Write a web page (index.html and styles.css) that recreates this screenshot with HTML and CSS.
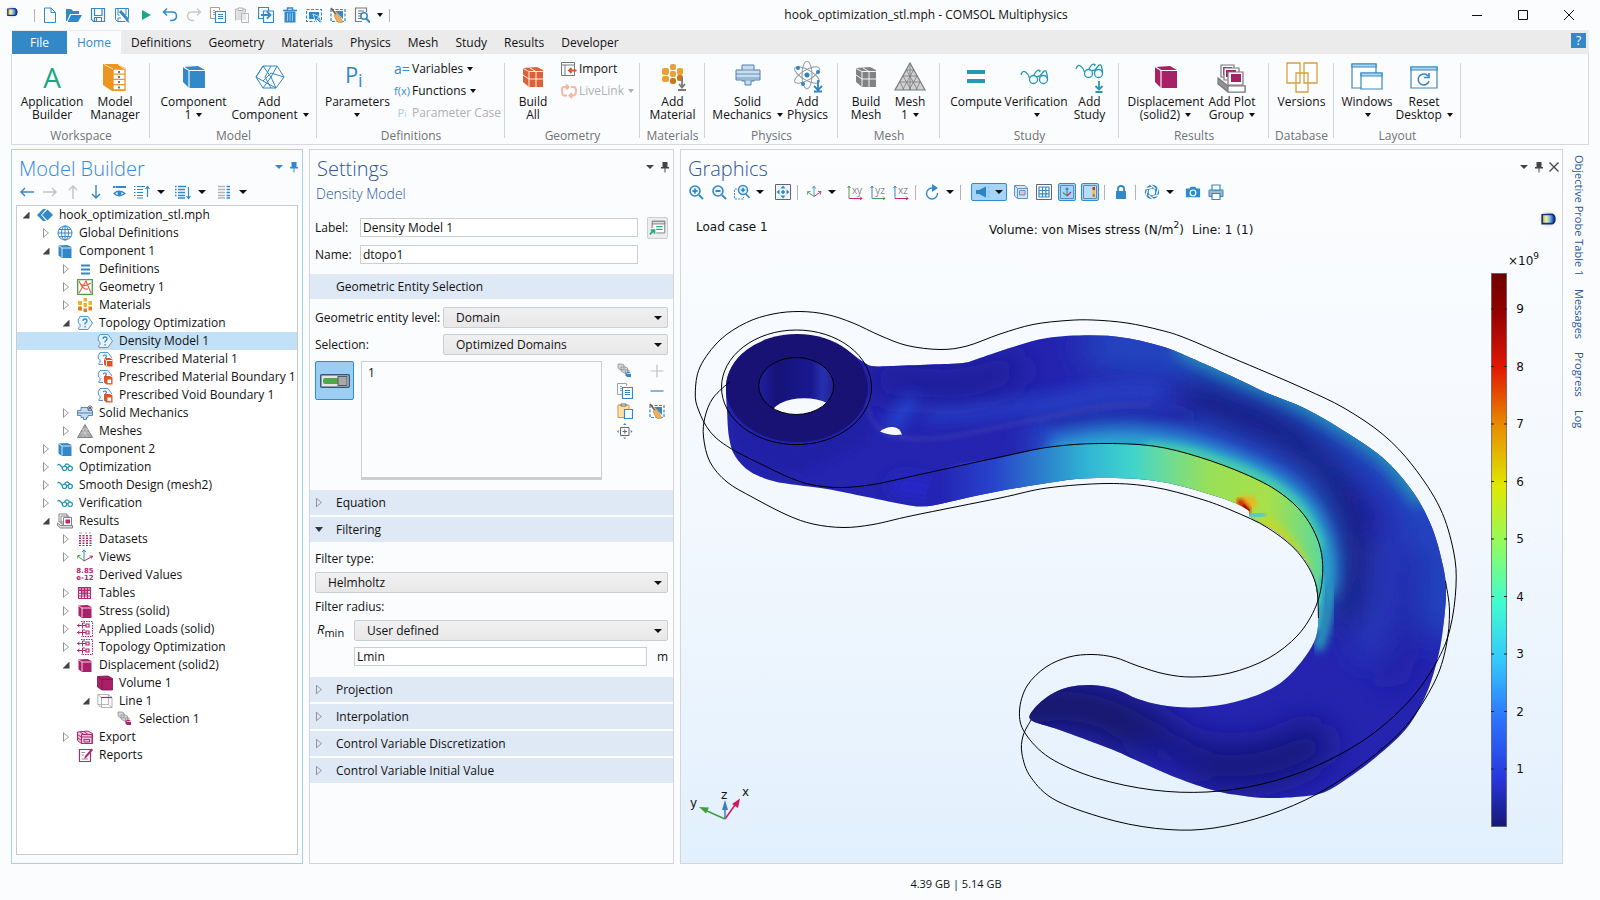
FILE: index.html
```html
<!DOCTYPE html>
<html lang="en">
<head>
<meta charset="utf-8">
<title>hook_optimization_stl.mph - COMSOL Multiphysics</title>
<link rel="stylesheet" href="styles.css">
</head>
<body>
<svg class="defs" aria-hidden="true">
  <symbol id="new" viewBox="0 0 16 16"><path d="M2.500 1H9L13.500 5.500V15.500H2.500ZM9 1V5.500H13.500" fill="none" stroke="#3388c8"/></symbol>
  <symbol id="open" viewBox="0 0 16 16"><path d="M0 2H5L7 4H13V7H4L1 14H0Z" fill="#3388c8"/><path d="M5 8H16L12 15H1.500Z" fill="#3388c8"/></symbol>
  <symbol id="save" viewBox="0 0 16 16"><path d="M1.500 1.500H14.500V14.500H3.500L1.500 12.500ZM4.500 1.500V8.500H12V1.500M4.500 14.500V10.500H11.500V14.500M6.500 11V14" fill="none" stroke="#3388c8" stroke-width="1.200"/></symbol>
  <symbol id="saveas" viewBox="0 0 16 16"><path d="M1.500 1.500H14.500V14.500H3.500L1.500 12.500ZM4 1.500V8H12V1.500M4 14.500V11H7" fill="none" stroke="#3388c8"/><path d="M6 5 14 14" stroke="#fff" stroke-width="4.500"/><path d="M6 4 14 13" stroke="#3388c8" stroke-width="3"/><path d="M13 12 16 16 12 14Z" fill="#3388c8"/></symbol>
  <symbol id="play" viewBox="0 0 16 16"><path d="M4 3 13 8 4 13Z" fill="#1ba784"/></symbol>
  <symbol id="undo" viewBox="0 0 16 16"><path d="M1.500 5H10Q14.500 5 14.500 9T10 13.500H8M5 1.500 1.500 5 5 8.500" fill="none" stroke="#3388c8" stroke-width="1.500"/></symbol>
  <symbol id="redo" viewBox="0 0 16 16"><path d="M14.500 5H6Q1.500 5 1.500 9T6 13.500H8M11 1.500 14.500 5 11 8.500" fill="none" stroke="#c8c8ca" stroke-width="1.400"/></symbol>
  <symbol id="copy" viewBox="0 0 16 16"><path d="M5 11.500H.5V.5H9.500V3M3 3.500H5M3 5.500H5M3 7.500H5" fill="none" stroke="#a0a0a4"/><path d="M5.500 4.500H15.500V15.500H5.500ZM8 7.500H13M8 9.500H13M8 11.500H13" fill="#fff" stroke="#3388c8" stroke-width="1.200"/></symbol>
  <symbol id="paste" viewBox="0 0 16 16"><path d="M1 2H12V13H1Z" fill="#dedee0"/><path d="M4 3.500V1H9V3.500Z" fill="#fff" stroke="#b0b0b2"/><path d="M1.500 13.500V2H4M9 2H11.500V5M7.500 6.500H14.500V15.500H7.500Z" fill="#fff" fill-opacity=".3" stroke="#b8b8ba"/></symbol>
  <symbol id="dup" viewBox="0 0 16 16"><path d="M.5.5H10.500V4H15.500V15.500H5.500V11.500H.5ZM10.500 4H5.500V11.500" fill="none" stroke="#3388c8" stroke-width="1.200"/><path d="M3 8H12M9 4.500 12.500 8 9 11.500" fill="none" stroke="#3388c8" stroke-width="1.800"/></symbol>
  <symbol id="trash" viewBox="0 0 16 16"><path d="M2.500 4.500H13.500V15.500H2.500Z" fill="#3388c8"/><path d="M1 3.500H15M5.500 3V1H10.500V3" fill="none" stroke="#3388c8" stroke-width="1.500"/><path d="M5.500 6V14M8 6V14M10.500 6V14" stroke="#9cc8ec"/></symbol>
  <symbol id="selbox" viewBox="0 0 16 16"><path d="M.5 2.500H15.500V14.500H.5Z" fill="none" stroke="#3388c8" stroke-dasharray="3 1.500" stroke-width="1.200"/><path d="M3 5H13V9L15 15 8 12H3Z" fill="#3388c8"/><path d="M7 7 14 10 11.500 11.200 15.500 15 14 16 10.500 12.500 9.500 15Z" fill="#3388c8" stroke="#fff" stroke-width=".7"/></symbol>
  <symbol id="clearsel" viewBox="0 0 16 16"><path d="M1 2.500H15V14.500H1Z" fill="none" stroke="#3388c8" stroke-dasharray="3 1.500" stroke-width="1.200"/><path d="M5 4H13V12Z" fill="#3388c8"/><path d="M1 1 6.500 8" stroke="#806040" stroke-width="1.800"/><path d="M4 8 8 6 13 15 9 16Q5 13 4 8Z" fill="#eeb060" stroke="#c88838" stroke-width=".6"/></symbol>
  <symbol id="find" viewBox="0 0 16 16"><path d="M8 14.500H1.500V1H12.500V5M4 4H10M4 6.500H8M4 9H7M4 11.500H7" fill="none" stroke="#77777a" stroke-width="1.100"/><circle cx="10" cy="9" r="3.200" fill="#fff" stroke="#3388c8" stroke-width="1.500"/><path d="M12 11.500 16 15.500" stroke="#3388c8" stroke-width="2"/></symbol>

  <symbol id="L-app" viewBox="0 0 32 32"><text x="16" y="27" font-family="Open Sans" font-size="28" text-anchor="middle" fill="#1ba784">A</text></symbol>
  <symbol id="L-manager" viewBox="0 0 32 32"><path d="M4 3H19L26 7V30H13L4 24Z" fill="#ee9420"/><path d="M14 8H26V29H14ZM14 13.200H26M14 18.400H26M14 23.600H26" fill="#fff" stroke="#ee9420" stroke-width="1.300"/><path d="M5 3.500 14 8M19 3.500 26 8" stroke="#fff" stroke-width=".8"/><path d="M19 10H21V12H19ZM19 15H21V17H19ZM19 20H21V22H19ZM19 25.500H21V27.500H19Z" fill="#77777a"/></symbol>
  <symbol id="L-cube" viewBox="0 0 32 32"><path d="M5 6 20 5 27 9V27H11L5 21Z" fill="currentColor"/><path d="M5.500 6 11 9.500H27M11 9.500V27" fill="none" stroke="#fff" stroke-width="1.100"/></symbol>
  <symbol id="L-addcomp" viewBox="0 0 32 32"><path d="M9 5H23L30 16 22 27H9L2 16ZM9 5 17 16 9 27M23 5 17 16 22 27M9 5 2 16M2 16 9 20 17 12 30 16M9 20 22 27M17 5 11 16 17 27" fill="none" stroke="#3388c8" stroke-width="1"/></symbol>
  <symbol id="L-param" viewBox="0 0 32 32"><text x="5" y="22" font-family="Open Sans" font-size="22" fill="#3388c8">P</text><text x="18" y="26" font-family="Open Sans" font-size="18" fill="#3388c8">i</text></symbol>
  <symbol id="L-bricks" viewBox="0 0 32 32"><path d="M6 7 20 6 26 9V26H12L6 21Z" fill="currentColor"/><path d="M6 7.500 12 10.500H26M12 10.500V26M19 10.500V26M12 18H26M6 14 12 18M13 7 19 10.500" fill="none" stroke="#fff" stroke-width=".9"/></symbol>
  <symbol id="L-material" viewBox="0 0 32 32"><g fill="#e8a038"><rect x="13" y="3" width="6" height="6" rx="2"/><rect x="5" y="7" width="7" height="7" rx="2"/><rect x="20" y="7" width="6" height="7" rx="2"/><rect x="13" y="10" width="6" height="6" rx="2"/><rect x="5" y="15" width="7" height="6" rx="2"/></g><g fill="#cc7818"><rect x="20" y="14" width="6" height="6" rx="2"/><rect x="13" y="17" width="6" height="6" rx="2"/></g><path d="M25 17V26M22 23 25 26.500 28 23M21 29H29" fill="none" stroke="#7a7a7c" stroke-width="1.800"/></symbol>
  <symbol id="L-solid" viewBox="0 0 32 32"><path d="M10 4H22V9H28V19H22V20H19V24H13V20H10V19H4V9H10Z" fill="#c8dcf0" stroke="#5080a8"/><path d="M10 9H22M4 13H28M10 19H22M4 17H28" stroke="#5080a8" stroke-width=".8"/></symbol>
  <symbol id="L-atom" viewBox="0 0 32 32"><g fill="none" stroke="#9098a0"><ellipse cx="15" cy="14" rx="5" ry="14"/><ellipse cx="15" cy="14" rx="5" ry="14" transform="rotate(60 15 14)"/><ellipse cx="15" cy="14" rx="5" ry="14" transform="rotate(120 15 14)"/></g><g fill="#2c84c4"><circle cx="15" cy="14" r="2.500"/><circle cx="6" cy="7" r="2"/><circle cx="26" cy="11" r="2"/><circle cx="11" cy="23" r="2"/></g><path d="M26 19V28M22 25 26 29 30 25M22 30.500H30" fill="none" stroke="#2c84c4" stroke-width="1.800"/></symbol>
  <symbol id="L-mesh" viewBox="0 0 32 32"><path d="M16 2 31 29H1Z" fill="#d0d0d2" stroke="#7a7a7c" stroke-width="1.200"/><path d="M12.500 9H19.500M9 15H23M6 21H26M12.500 9 23.500 29M19.500 9 8.500 29M9 15 17 29M23 15 15 29M6 21 10 29M26 21 22 29M16 2V29" fill="none" stroke="#7a7a7c" stroke-width=".8"/></symbol>
  <symbol id="L-compute" viewBox="0 0 32 32"><path d="M7 9H25V13H7ZM7 18H25V22H7Z" fill="#2498b4"/></symbol>
  <symbol id="L-glasses" viewBox="0 0 32 32"><g fill="none" stroke="#2498b4" stroke-width="1.300"><circle cx="13.500" cy="18.500" r="4"/><circle cx="23.500" cy="18.500" r="4"/><path d="M1 14Q2.500 9 5.500 11T9.500 17M17 16Q18.500 14.500 20 16M14 14Q17 8 20 9.500L19.500 11M19 16 24 10Q27 8.500 27.500 18"/></g></symbol>
  <symbol id="L-addstudy" viewBox="0 0 32 32"><g fill="none" stroke="#2498b4" stroke-width="1.300"><circle cx="14.500" cy="12.500" r="4"/><circle cx="24.500" cy="12.500" r="4"/><path d="M2 8Q3.500 3 6.500 5T10.500 11M18 10Q19.500 8.500 21 10M15 8Q18 2 21 3.500L20.500 5M20 10 25 4Q28 2.500 28.500 12"/><path d="M25 20V28M21.500 25 25 28.500 28.500 25M21.500 31H28.500" stroke-width="1.800"/></g></symbol>
  <symbol id="L-plotgroup" viewBox="0 0 32 32"><g stroke="#77777a" stroke-width="1.200"><path d="M5 4H18V16H5Z" fill="#fff"/><path d="M7 6H16V14H7Z" fill="#a82068" stroke="none"/><path d="M8 7H23V19H8Z" fill="#fff"/><path d="M10 9H20V16H10Z" fill="#a82068" stroke="none"/><path d="M12 11H27V24H12Z" fill="#fff"/><path d="M15 13H25V21H15Z" fill="#a82068" stroke="none"/><path d="M2 17 12 25H29V31H12L2 23Z" fill="#909294"/><path d="M12 25H29V31H12Z" fill="#fff"/></g></symbol>
  <symbol id="L-versions" viewBox="0 0 32 32"><g fill="#fff" stroke="#d8a040" stroke-width="1.300"><path d="M1 2H14V22H1ZM18 2H31V22H18ZM10 12H22V31H10Z"/></g></symbol>
  <symbol id="L-windows" viewBox="0 0 32 32"><g fill="#fff" stroke="#3c88bc" stroke-width="1.200"><path d="M1 3H25V27H1Z"/><path d="M1 3H25V6H1Z" fill="#a8d8f8"/><path d="M10 12H31V28H10Z"/><path d="M10 12H31V15H10Z" fill="#a8d8f8"/></g></symbol>
  <symbol id="L-reset" viewBox="0 0 32 32"><g fill="#fff" stroke="#3c88bc" stroke-width="1.200"><path d="M3 6H29V27H3Z"/><path d="M3 6H29V9H3Z" fill="#a8d8f8"/><path d="M20 15A5.500 5.500 0 1 0 21 20M21 12V16.500H16" fill="none" stroke-width="1.600"/></g></symbol>

  <symbol id="s-import" viewBox="0 0 16 16"><path d="M.5 1.500H13.500V14.500H.5ZM.5 4H13.500M4 4V14" fill="#fff" stroke="#77777a"/><path d="M15.500 9.500H8M10.500 7 8 9.500 10.500 12" fill="none" stroke="#dc5428" stroke-width="1.800"/></symbol>
  <symbol id="s-link" viewBox="0 0 16 16"><path d="M6 12.500H3Q1 12.500 1 8T3 4H6M5 1.500 7.500 4 5 6.500M10 4H13Q15 4 15 8T13 12.500H10M11 10 8.500 12.500 11 15" fill="none" stroke="#f4b8a4" stroke-width="2"/></symbol>

  <symbol id="pin" viewBox="0 0 10 12"><path d="M2.500 1H7.500V6H9V7.500H1V6H2.500ZM4.500 7.500H5.500V11.500H4.500Z" fill="currentColor"/></symbol>
  <symbol id="t-left" viewBox="0 0 16 16"><path d="M15 8H2M6 4 2 8 6 12" fill="none" stroke="currentColor" stroke-width="1.400"/></symbol>
  <symbol id="t-eye" viewBox="0 0 16 16"><path d="M2 3H15" stroke="#3388c8" stroke-width="2" stroke-dasharray="2 .5 12"/><path d="M3 9.500Q8 5 14 9.500 8 14 3 9.500Z" fill="none" stroke="#3388c8" stroke-width="1.300"/><circle cx="8.500" cy="9.500" r="2" fill="#3388c8"/></symbol>
  <symbol id="t-list" viewBox="0 0 16 16"><path d="M0 2.500H1.500M0 5.500H1.500M0 8.500H1.500M0 11.500H1.500M3 2.500H11M3 5.500H9M3 8.500H9M3 11.500H9M3 14H9" stroke="#3388c8" stroke-width="1.200"/><path d="M13.500 13V3M11.500 5 13.500 2.500 15.500 5" fill="none" stroke="#3388c8" stroke-width="1.200"/></symbol>
  <symbol id="t-listd" viewBox="0 0 16 16"><path d="M0 2.500H1.500M0 5.500H1.500M0 8.500H1.500M0 11.500H1.500M3 2.500H11M3 5.500H10M3 8.500H10M3 11.500H10M3 14H10" stroke="#3388c8" stroke-width="1.600"/><path d="M13.500 3V14M11.500 12 13.500 14.500 15.500 12" fill="none" stroke="#3388c8" stroke-width="1.200"/></symbol>
  <symbol id="t-cols" viewBox="0 0 16 16"><path d="M2 2.500H9M2 5.500H9M2 8.500H9M2 11.500H9M2 14H9" stroke="#b4b4b6" stroke-width="1.400"/><path d="M10.500 2.500H14M10.500 5.500H14M10.500 8.500H14M10.500 11.500H14M10.500 14H14" stroke="#3388c8" stroke-width="1.500"/></symbol>

  <symbol id="i-root" viewBox="0 0 16 16"><path d="M0 8 6 2H9L4 8 9 14H6Z" fill="#3388c8"/><path d="M5 8 10.500 2.500 16 8 10.500 13.500Z" fill="#3388c8"/></symbol>
  <symbol id="i-globe" viewBox="0 0 16 16"><g fill="none" stroke="#3388c8"><circle cx="8" cy="8" r="7"/><ellipse cx="8" cy="8" rx="3.500" ry="7"/><path d="M1 8H15M2 4.500H14M2 11.500H14M8 1V15"/></g></symbol>
  <symbol id="i-cube" viewBox="0 0 16 16"><path d="M1.500 2.500 10.500 2 14.500 4V15H5L1.500 12.500Z" fill="currentColor"/><path d="M2 3 5 5H14.500M5 5V14.500" fill="none" stroke="#fff" stroke-width=".8"/></symbol>
  <symbol id="i-defs" viewBox="0 0 16 16"><path d="M4 4.500H13M4 8.500H13M4 12.500H13" stroke="#3388c8" stroke-width="2"/></symbol>
  <symbol id="i-geom" viewBox="0 0 16 16"><path d="M.7.700H15.300V15.300H.7Z" fill="#fff" stroke="#48a048" stroke-width="1.300"/><path d="M2 14 9 2 14 14M2 2Q5 10 14 4M3 4Q6 11 11 10" fill="none" stroke="#e06038" stroke-width="1.100"/></symbol>
  <symbol id="i-mat" viewBox="0 0 16 16"><path d="M6.500 1H10V4.500H6.500ZM1 4H5V8H1ZM6.500 6H10V10H6.500ZM11.500 4H15V8H11.500Z" fill="#f0b030"/><path d="M1 9.500H5V13.500H1ZM6.500 11.500H10V15H6.500ZM11.500 9.500H15V13.500H11.500Z" fill="#dc8018"/></symbol>
  <symbol id="i-topo" viewBox="0 0 16 16"><path d="M3 1.500H11L15.500 8 11 14.500H2Q.5 13 3 11.500 4 9 1.500 8 0 5 3 1.500Z" fill="#e8f2fc" stroke="#5898cc"/><path d="M6 6Q6 4 8 4T10 6Q10 7 8 8.500V9.500M8 11V12.500" fill="none" stroke="#3388c8" stroke-width="1.300"/></symbol>
  <symbol id="i-presc" viewBox="0 0 16 16"><path d="M3 1.500H11L15 7M6 13.500H2Q.5 13 3 11.500 4 9 1.500 8 0 5 3 1.500" fill="#e8f2fc" stroke="#5898cc"/><path d="M6 5Q8 3 9.500 5L8 8" fill="none" stroke="#3388c8" stroke-width="1.200"/><path d="M7 7H13L15.500 8.500V15.500H9.500L7 13.500Z" fill="#dc5428"/><path d="M7 7.500 9.500 9.500H15.500M9.500 9.500V15" fill="none" stroke="#fff" stroke-width=".9"/></symbol>
  <symbol id="i-prescb" viewBox="0 0 16 16"><path d="M3 1.500H11L15 7M6 13.500H2Q.5 13 3 11.500 4 9 1.500 8 0 5 3 1.500" fill="#e8f2fc" stroke="#5898cc"/><path d="M6 5Q8 3 9.500 5L8 8" fill="none" stroke="#3388c8" stroke-width="1.200"/><path d="M7 7H13L15.500 8.500V15.500H9.500L7 13.500Z" fill="#dc5428"/><path d="M10.500 10.500H14.200V14.200H10.500Z" fill="#fff"/></symbol>
  <symbol id="i-solid" viewBox="0 0 16 16"><path d="M4 2.500H11V5.500H15.500V10.500H11V12.500H9.500V14.500H6.500V12.500H4V10.500H.5V5.500H4Z" fill="#c8dcf0" stroke="#5080a8" stroke-width=".9"/><path d="M0 8H16" stroke="#5080a8"/><path d="M13 0V6M10 3H16M11 1 15 5M15 1 11 5" stroke="#606468" stroke-width=".9"/></symbol>
  <symbol id="i-mesh" viewBox="0 0 16 16"><path d="M8 1.500 15.500 14.500H.5Z" fill="#a8a8aa" stroke="#828284"/><path d="M5.500 6H10.500M3.500 10H12.500M5.500 6 10.500 14M10.500 6 5.500 14" stroke="#d8d8da" stroke-width=".7"/></symbol>
  <symbol id="i-glass" viewBox="0 0 16 16"><g fill="none" stroke="#2498b4" stroke-width="1.200"><circle cx="7.500" cy="9.300" r="2.200"/><circle cx="13.200" cy="9.300" r="2.200"/><path d="M.5 6.500Q1.500 4.500 3 6T5.500 9M7.500 7Q9 4.500 10.500 5L13 7M9.700 8.500 11 8.500"/></g></symbol>
  <symbol id="i-results" viewBox="0 0 16 16"><path d="M2 1H10V9H2ZM4 3H12V11H4Z" fill="#fff" stroke="#828284"/><path d="M6.500 4.500H14.500V12.500H6.500Z" fill="#fff" stroke="#828284"/><path d="M8.500 6.500H13V10.500H8.500Z" fill="#c02870"/><path d="M.5 10 3.500 12.500H15.500V15H3.500L.5 12.500Z" fill="#ddd" stroke="#828284"/></symbol>
  <symbol id="i-data" viewBox="0 0 16 16"><path d="M2 2H5M8 2H10M12 2H14" stroke="#a0a0a2"/><path d="M3 4V15M6.500 4V15M10 4V15M13.500 4V15" stroke="#b02870" stroke-width="2" stroke-dasharray="1.500 1"/></symbol>
  <symbol id="i-views" viewBox="0 0 16 16"><path d="M7 12V1M5 3 7 .8 9 3" fill="none" stroke="#3388c8"/><path d="M7 12 1 7M.8 9.500V6.500H3.500" fill="none" stroke="#48a048"/><path d="M7 12 15 7.500M12.500 7H15.500L14.500 9.500" fill="none" stroke="#c02870"/></symbol>
  <symbol id="i-table" viewBox="0 0 16 16"><path d="M1.500 2.500H13.500V13.500H1.500Z" fill="#fff"/><path d="M1.500 2.500H13.500V5.500H1.500Z" fill="#d888b0"/><path d="M5 5.500H10V10H5Z" fill="#d888b0"/><path d="M1.500 2.500H13.500V13.500H1.500ZM1.500 5.500H13.500M1.500 8.300H13.500M1.500 11H13.500M4.500 2.500V13.500M7.500 2.500V13.500M10.500 2.500V13.500" fill="none" stroke="#b02870" stroke-width="1.100"/></symbol>
  <symbol id="i-arrows" viewBox="0 0 16 16"><path d="M4 .5H15.500V15.500H4" fill="none" stroke="#b02870" stroke-dasharray="1.500 1"/><path d="M5.500 2V7.500M5.500 9V14.500M.5 4.500H9M.5 11.500H9M2.500 3 .5 4.500 2.500 6M2.500 10 .5 11.500 2.500 13M5.500 2H8M5.500 9H8" fill="none" stroke="#b02870"/><path d="M9 3H12V6H9ZM9 10H12V13H9Z" fill="#fff" stroke="#b02870" stroke-width="1.200"/></symbol>
  <symbol id="i-volume" viewBox="0 0 16 16"><path d="M.5 1.500 11 1 15.500 3.500V15H5L.5 12Z" fill="#a82068" stroke="#7c1048" stroke-width=".8"/><path d="M1 2 5 4.500H15.500M5 4.500V14.500" fill="none" stroke="#7c1048" stroke-width=".8"/></symbol>
  <symbol id="i-line" viewBox="0 0 16 16"><path d="M.8 1.500H11.500L15 4.500V14.500H4.500L.8 11.500ZM11.500 1.500V11.500H.8M11.500 11.500 15 14.500M4.500 4.500V14.500M.8 1.500 4.500 4.500" fill="none" stroke="#b4b4b6"/><path d="M4 4.500H15" stroke="#b02870" stroke-width="1.200"/></symbol>
  <symbol id="i-sel" viewBox="0 0 16 16"><path d="M1 1H5L7 2V7L3 6.500 1 5ZM4 4H8.500L10.500 5V10H7L4 8ZM8 7H12V11H9Z" fill="#d4d4d6" stroke="#929294" stroke-width=".8"/><path d="M8.500 9H12L14 10V14H10L8.500 12.500Z" fill="currentColor"/><path d="M9 9.300 10.200 10.500H14" fill="none" stroke="#fff" stroke-width=".7"/></symbol>
  <symbol id="i-export" viewBox="0 0 16 16"><path d="M.5 3 11 2 15.500 4.500V14.500H4.500L.5 11.500Z" fill="#eec8da" stroke="#b02870"/><path d="M4.500 5.500H15V14.500H4.500ZM4.500 8H15M7 10.500H12.500V13H7ZM1 6 4.500 8M1 9 4.500 11.500M3 3 7 5.500M7 2.500 11 5.500" fill="none" stroke="#b02870"/></symbol>
  <symbol id="i-report" viewBox="0 0 16 16"><path d="M2.500 2.500H13.500V14.500H2.500Z" fill="#fff" stroke="#b02870" stroke-width="1.200"/><path d="M4.500 5.500H8M4.500 8H7M4.500 12H11" stroke="#909092"/><path d="M7 12 8 9 14.500 1.500 16 3 9.500 10.500Z" fill="#b02870"/></symbol>

  <symbol id="g-goto" viewBox="0 0 20 20"><path d="M3.500 2.500H17.500V15.500H8" fill="#fff" stroke="#77777a"/><path d="M3.500 10V2.500H17.500V5.500H3.500" fill="#ddd" stroke="#77777a"/><path d="M8 8.500H15M8 11.500H15" stroke="#28a888" stroke-width="1.200"/><path d="M1 17 5 13M2 12.500H6V16.500" fill="none" stroke="#28a888" stroke-width="2"/></symbol>
  <symbol id="g-toggle" viewBox="0 0 30 14"><rect x=".75" y=".75" width="28.500" height="12.500" rx="1" fill="#e4e4e4" stroke="#33587c" stroke-width="1.500"/><path d="M3 6Q3 4 5 4H18V10H5Q3 10 3 8Z" fill="#50a848"/><rect x="18" y="2.500" width="9" height="9" fill="#a8a8aa" stroke="#555a60"/></symbol>
  <symbol id="g-plus" viewBox="0 0 16 16"><path d="M8 1.500V14.500M1.500 8H14.500" stroke="#c0c0c2" stroke-width="1.200"/></symbol>
  <symbol id="g-minus" viewBox="0 0 16 16"><path d="M1.500 8H14.500" stroke="#3388c8" stroke-width="1.200"/></symbol>
  <symbol id="g-clip" viewBox="0 0 16 16"><path d="M1 2H12V14.500H1Z" fill="#fce0a8" stroke="#d89838"/><path d="M4 3V1H9V3Z" fill="#fff" stroke="#66666a"/><path d="M7.500 6.500H15.500V15.500H7.500Z" fill="#fff" stroke="#3388c8" stroke-width="1.200"/></symbol>
  <symbol id="g-zoomsel" viewBox="0 0 16 16"><path d="M3.500 4.500H12V12.500H3.500ZM5.500 8.500H10M7.800 6.300V10.700" fill="none" stroke="#66666a"/><path d="M7.800 0 9.500 2H6ZM7.800 16 9.500 14.500H6ZM0 8.500 1.800 7V10ZM15.500 8.500 13.700 7V10Z" fill="#3388c8"/></symbol>

  <symbol id="v-in" viewBox="0 0 16 16"><circle cx="7" cy="7" r="5" fill="#eaf4fc" stroke="#3388c8" stroke-width="1.600"/><path d="M4.500 7H9.500M7 4.500V9.500M11 11 15 15" stroke="#3388c8" stroke-width="1.800"/></symbol>
  <symbol id="v-out" viewBox="0 0 16 16"><circle cx="7" cy="7" r="5" fill="#eaf4fc" stroke="#3388c8" stroke-width="1.600"/><path d="M4.500 7H9.500M11 11 15 15" stroke="#3388c8" stroke-width="1.800"/></symbol>
  <symbol id="v-box" viewBox="0 0 16 16"><path d="M6 5H.5V15H9.500V13" fill="none" stroke="#3388c8" stroke-dasharray="2 1.200"/><circle cx="9" cy="6" r="4.500" fill="#eaf4fc" stroke="#3388c8" stroke-width="1.500"/><path d="M6.800 6H11.200M9 3.800V8.200M12 10 15.500 14" stroke="#3388c8" stroke-width="1.600"/></symbol>
  <symbol id="v-fit" viewBox="0 0 16 16"><path d="M.5.5H15.500V15.500H.5Z" fill="#eef6fc" stroke="#66666a"/><path d="M8 1.500 10.500 4.500H5.500ZM8 14.500 10.500 11.500H5.500ZM1.500 8 4.500 5.500V10.500ZM14.500 8 11.500 5.500V10.500ZM7.200 6H8.800V10H7.200ZM6 7.200H10V8.800H6Z" fill="#3388c8"/></symbol>
  <symbol id="v-axes" viewBox="0 0 18 16"><path d="M9 13V2M7 4 9 1.500 11 4" fill="none" stroke="#3388c8"/><path d="M9 13 2 8M1.800 11V7.500H5" fill="none" stroke="#48a048"/><path d="M9 13 16.500 8M13.500 7.500H17L16 11" fill="none" stroke="#c02870"/></symbol>
  <symbol id="v-xy" viewBox="0 0 16 16"><path d="M2 14.500H15M13 12.500 15 14.500 13 16" fill="none" stroke="#c02870"/><path d="M2 14.500V2M.5 4 2 2 3.500 4" fill="none" stroke="#48a048"/><text x="10" y="10" font-family="Open Sans" font-size="10" text-anchor="middle" fill="#88888c">xy</text></symbol>
  <symbol id="v-yz" viewBox="0 0 16 16"><path d="M2 14.500H15M13 12.500 15 14.500 13 16" fill="none" stroke="#48a048"/><path d="M2 14.500V2M.5 4 2 2 3.500 4" fill="none" stroke="#3388c8"/><text x="10" y="10" font-family="Open Sans" font-size="10" text-anchor="middle" fill="#88888c">yz</text></symbol>
  <symbol id="v-xz" viewBox="0 0 16 16"><path d="M2 14.500H15M13 12.500 15 14.500 13 16" fill="none" stroke="#c02870"/><path d="M2 14.500V2M.5 4 2 2 3.500 4" fill="none" stroke="#3388c8"/><text x="10" y="10" font-family="Open Sans" font-size="10" text-anchor="middle" fill="#88888c">xz</text></symbol>
  <symbol id="v-rot" viewBox="0 0 16 16"><path d="M13.500 9A5.500 5.500 0 1 1 8 4" fill="none" stroke="#3388c8" stroke-width="1.400"/><path d="M8 0 14 4 8 8Z" fill="#3388c8"/></symbol>
  <symbol id="v-light" viewBox="0 0 16 16"><path d="M1 6H4L11 2.500V13.500L4 10H1Z" fill="#2c84c4"/><path d="M12.500 4 14.500 3M12.500 8H15M12.500 12 14.500 13" stroke="#7cb8e4"/></symbol>
  <symbol id="v-transp" viewBox="0 0 16 16"><path d="M1.500 1.500H12L14.500 4V14.500H4.500L1.500 12Z" fill="#d4e4f4" stroke="#5898cc"/><path d="M1.500 1.500 4.500 4.500H14.500M4.500 4.500V14.500" fill="none" stroke="#5898cc"/><path d="M6.500 6.500H12V11H6.500Z" fill="#c4cce4" stroke="#88a"/></symbol>
  <symbol id="v-grid" viewBox="0 0 16 16"><path d="M.5.5H15.500V15.500H.5Z" fill="#fff" stroke="#66666a"/><path d="M3 3H13V13H3ZM3 6.500H13M3 9.800H13M6.500 3V13M9.800 3V13" fill="none" stroke="#3388c8" stroke-width="1.200"/></symbol>
  <symbol id="v-axon" viewBox="0 0 16 16"><path d="M1.500 1.500H14.500V14.500H1.500Z" fill="none" stroke="#6888a8"/><path d="M8 12V4M6.500 5.500 8 4 9.500 5.500" fill="none" stroke="#3388c8" stroke-width="1.200"/><path d="M8 12 4 8.500" stroke="#48a048" stroke-width="1.300"/><path d="M8 12 12 8" stroke="#c02870" stroke-width="1.300"/></symbol>
  <symbol id="v-legend" viewBox="0 0 16 16"><path d="M1.500 1.500H14.500V14.500H1.500Z" fill="#b8dcf8" stroke="#6888a8"/><path d="M10.500 3H13V6H10.500Z" fill="#c83020"/><path d="M10.500 6H13V10H10.500Z" fill="#f0c030"/><path d="M10.500 10H13V13H10.500Z" fill="#e07828"/></symbol>
  <symbol id="v-lock" viewBox="0 0 16 16"><path d="M3 7H13V15H3Z" fill="#3388c8"/><path d="M5 7V4.500Q5 2 8 2T11 4.500V7" fill="none" stroke="#3388c8" stroke-width="1.800"/></symbol>
  <symbol id="v-shutter" viewBox="0 0 16 16"><circle cx="8" cy="8" r="5.200" fill="none" stroke="#3388c8" stroke-width="4"/><path d="M0 5 8 3.500M6 0 11.500 5M14.500 3 12.500 10.500M16 11 8.500 12.500M10 16 4.500 11M1.500 13 3.500 6" stroke="#fbfcfe" stroke-width="1.300"/></symbol>
  <symbol id="v-cam" viewBox="0 0 18 16"><path d="M1 4H5L6.500 2H11.500L13 4H17V14H1Z" fill="#3388c8"/><circle cx="9" cy="9" r="3.200" fill="none" stroke="#fff" stroke-width="1.300"/></symbol>
  <symbol id="v-print" viewBox="0 0 16 16"><path d="M1 6H15V12.500H1Z" fill="#a8b4c0" stroke="#3388c8"/><path d="M4 6V1H12V6ZM4 9.500H12V15.500H4Z" fill="#fff" stroke="#3388c8" stroke-width="1.200"/></symbol>
</svg>

<header class="titlebar">
  <svg class="applogo" viewBox="0 0 20 20">
    <defs>
      <radialGradient id="logoGlow"><stop offset=".5" stop-color="#dcdce2"/><stop offset="1" stop-color="#fff" stop-opacity="0"/></radialGradient>
      <linearGradient id="logoFill"><stop offset="0" stop-color="#b8c070"/><stop offset=".3" stop-color="#fff08c"/><stop offset=".6" stop-color="#88c8e4"/><stop offset="1" stop-color="#1850b0"/></linearGradient>
    </defs>
    <symbol id="logo" viewBox="0 0 20 20"><circle cx="10" cy="10" r="10" fill="url(#logoGlow)"/><path d="M4 5.500 14 5Q17 6 17 10T14 15H4Z" fill="#182c80"/><path d="M5.500 6.500H14Q15 8 15 10T14 13.500H5.500Z" fill="url(#logoFill)"/></symbol>
    <use href="#logo" width="20" height="20"/>
  </svg>
  <nav class="quick" aria-label="Quick access">
    <span class="bar"></span>
    <button aria-label="New"><svg><use href="#new"/></svg></button>
    <button aria-label="Open"><svg><use href="#open"/></svg></button>
    <button aria-label="Save"><svg><use href="#save"/></svg></button>
    <button aria-label="Save as"><svg><use href="#saveas"/></svg></button>
    <button aria-label="Run"><svg><use href="#play"/></svg></button>
    <button aria-label="Undo"><svg><use href="#undo"/></svg></button>
    <button aria-label="Redo"><svg><use href="#redo"/></svg></button>
    <button aria-label="Copy"><svg><use href="#copy"/></svg></button>
    <button aria-label="Paste"><svg><use href="#paste"/></svg></button>
    <button aria-label="Duplicate"><svg><use href="#dup"/></svg></button>
    <button aria-label="Delete"><svg><use href="#trash"/></svg></button>
    <button aria-label="Select box"><svg><use href="#selbox"/></svg></button>
    <button aria-label="Clear selection"><svg><use href="#clearsel"/></svg></button>
    <button aria-label="Find"><svg><use href="#find"/></svg></button>
    <button class="slim" aria-label="More"><i class="caret"></i></button>
    <span class="bar"></span>
  </nav>
  <h1>hook_optimization_stl.mph - COMSOL Multiphysics</h1>
  <div class="wincontrols">
    <button aria-label="Minimize"><svg viewBox="0 0 12 12"><path d="M1 6.500H11" stroke="#111" fill="none"/></svg></button>
    <button aria-label="Maximize"><svg viewBox="0 0 12 12"><path d="M1.500 1.500H10.500V10.500H1.500Z" stroke="#111" fill="none"/></svg></button>
    <button aria-label="Close"><svg viewBox="0 0 12 12"><path d="M1 1 11 11M11 1 1 11" stroke="#111" fill="none"/></svg></button>
  </div>
</header>

<nav class="tabs" aria-label="Ribbon tabs">
  <button class="file">File</button><button class="active">Home</button><button>Definitions</button><button>Geometry</button><button>Materials</button><button>Physics</button><button>Mesh</button><button>Study</button><button>Results</button><button>Developer</button>
  <button class="help" aria-label="Help">?</button>
</nav>

<section class="ribbon" aria-label="Home">
  <div class="group g-workspace"><div class="tools">
    <button class="big w62"><svg><use href="#L-app"/></svg>Application<br>Builder</button>
    <button class="big w62"><svg><use href="#L-manager"/></svg>Model<br>Manager</button>
  </div><p>Workspace</p></div>
  <div class="group g-model"><div class="tools">
    <button class="big w76 blue"><svg><use href="#L-cube"/></svg>Component<br>1 <i class="caret"></i></button>
    <button class="big w76"><svg><use href="#L-addcomp"/></svg>Add<br>Component <i class="caret"></i></button>
  </div><p>Model</p></div>
  <div class="group g-definitions"><div class="tools">
    <button class="big w62"><svg><use href="#L-param"/></svg>Parameters<br><i class="caret"></i></button>
    <div class="stack">
      <button><b class="glyph large">a=</b>Variables <i class="caret"></i></button>
      <button><b class="glyph">f(x)</b>Functions <i class="caret"></i></button>
      <button class="off" disabled><b class="glyph">P<small>i</small></b>Parameter Case</button>
    </div>
  </div><p>Definitions</p></div>
  <div class="group g-geometry"><div class="tools">
    <button class="big w44 red"><svg><use href="#L-bricks"/></svg>Build<br>All</button>
    <div class="stack">
      <button><svg><use href="#s-import"/></svg>Import</button>
      <button class="off" disabled><svg><use href="#s-link"/></svg>LiveLink <i class="caret"></i></button>
    </div>
  </div><p>Geometry</p></div>
  <div class="group g-narrow"><div class="tools">
    <button class="big w56"><svg><use href="#L-material"/></svg>Add<br>Material</button>
  </div><p>Materials</p></div>
  <div class="group g-physics"><div class="tools">
    <button class="big w76"><svg><use href="#L-solid"/></svg>Solid<br>Mechanics <i class="caret"></i></button>
    <button class="big w44"><svg><use href="#L-atom"/></svg>Add<br>Physics</button>
  </div><p>Physics</p></div>
  <div class="group g-mesh"><div class="tools">
    <button class="big w44 grey"><svg><use href="#L-bricks"/></svg>Build<br>Mesh</button>
    <button class="big w44"><svg><use href="#L-mesh"/></svg>Mesh<br>1 <i class="caret"></i></button>
  </div><p>Mesh</p></div>
  <div class="group g-study"><div class="tools">
    <button class="big w56"><svg><use href="#L-compute"/></svg>Compute</button>
    <button class="big w62"><svg><use href="#L-glasses"/></svg>Verification<br><i class="caret"></i></button>
    <button class="big w44"><svg><use href="#L-addstudy"/></svg>Add<br>Study</button>
  </div><p>Study</p></div>
  <div class="group g-results"><div class="tools">
    <button class="big w76 plum"><svg><use href="#L-cube"/></svg>Displacement<br>(solid2) <i class="caret"></i></button>
    <button class="big w56"><svg><use href="#L-plotgroup"/></svg>Add Plot<br>Group <i class="caret"></i></button>
  </div><p>Results</p></div>
  <div class="group g-narrow"><div class="tools">
    <button class="big w56"><svg><use href="#L-versions"/></svg>Versions</button>
  </div><p>Database</p></div>
  <div class="group g-layout"><div class="tools">
    <button class="big w56"><svg><use href="#L-windows"/></svg>Windows<br><i class="caret"></i></button>
    <button class="big w56"><svg><use href="#L-reset"/></svg>Reset<br>Desktop <i class="caret"></i></button>
  </div><p>Layout</p></div>
</section>

<main>
  <section class="panel builder">
    <div class="head"><h2>Model Builder</h2><button aria-label="Panel menu"><i class="caret wide"></i></button><button aria-label="Pin"><svg class="pin"><use href="#pin"/></svg></button></div>
    <div class="toolbar">
      <button class="blue" aria-label="Back"><svg><use href="#t-left"/></svg></button>
      <button class="pale" aria-label="Forward"><svg class="r180"><use href="#t-left"/></svg></button>
      <button class="pale" aria-label="Up"><svg class="r90"><use href="#t-left"/></svg></button>
      <button class="blue" aria-label="Down"><svg class="r270"><use href="#t-left"/></svg></button>
      <button aria-label="Show"><svg><use href="#t-eye"/></svg></button>
      <button aria-label="Collapse"><svg><use href="#t-list"/></svg></button><button class="slim" aria-label="Collapse options"><i class="caret wide"></i></button>
      <button aria-label="Expand"><svg><use href="#t-listd"/></svg></button><button class="slim" aria-label="Expand options"><i class="caret wide"></i></button>
      <button aria-label="Columns"><svg><use href="#t-cols"/></svg></button><button class="slim" aria-label="Column options"><i class="caret wide"></i></button>
    </div>
    <ul class="tree">
      <li class="l0"><i class="tw open"></i><svg><use href="#i-root"/></svg>hook_optimization_stl.mph</li>
      <li class="l1"><i class="tw shut"></i><svg><use href="#i-globe"/></svg>Global Definitions</li>
      <li class="l1 blue"><i class="tw open"></i><svg><use href="#i-cube"/></svg><span>Component 1</span></li>
      <li class="l2"><i class="tw shut"></i><svg><use href="#i-defs"/></svg>Definitions</li>
      <li class="l2"><i class="tw shut"></i><svg><use href="#i-geom"/></svg>Geometry 1</li>
      <li class="l2"><i class="tw shut"></i><svg><use href="#i-mat"/></svg>Materials</li>
      <li class="l2"><i class="tw open"></i><svg><use href="#i-topo"/></svg>Topology Optimization</li>
      <li class="l3 selected"><i class="tw"></i><svg><use href="#i-topo"/></svg>Density Model 1</li>
      <li class="l3"><i class="tw"></i><svg><use href="#i-presc"/></svg>Prescribed Material 1</li>
      <li class="l3"><i class="tw"></i><svg><use href="#i-prescb"/></svg>Prescribed Material Boundary 1</li>
      <li class="l3"><i class="tw"></i><svg><use href="#i-prescb"/></svg>Prescribed Void Boundary 1</li>
      <li class="l2"><i class="tw shut"></i><svg><use href="#i-solid"/></svg>Solid Mechanics</li>
      <li class="l2"><i class="tw shut"></i><svg><use href="#i-mesh"/></svg>Meshes</li>
      <li class="l1 blue"><i class="tw shut"></i><svg><use href="#i-cube"/></svg><span>Component 2</span></li>
      <li class="l1"><i class="tw shut"></i><svg><use href="#i-glass"/></svg>Optimization</li>
      <li class="l1"><i class="tw shut"></i><svg><use href="#i-glass"/></svg>Smooth Design (mesh2)</li>
      <li class="l1"><i class="tw shut"></i><svg><use href="#i-glass"/></svg>Verification</li>
      <li class="l1"><i class="tw open"></i><svg><use href="#i-results"/></svg>Results</li>
      <li class="l2"><i class="tw shut"></i><svg><use href="#i-data"/></svg>Datasets</li>
      <li class="l2"><i class="tw shut"></i><svg><use href="#i-views"/></svg>Views</li>
      <li class="l2"><i class="tw"></i><b class="digits">8.85<br>e-12</b>Derived Values</li>
      <li class="l2"><i class="tw shut"></i><svg><use href="#i-table"/></svg>Tables</li>
      <li class="l2 plum"><i class="tw shut"></i><svg><use href="#i-cube"/></svg><span>Stress (solid)</span></li>
      <li class="l2"><i class="tw shut"></i><svg><use href="#i-arrows"/></svg>Applied Loads (solid)</li>
      <li class="l2"><i class="tw shut"></i><svg><use href="#i-arrows"/></svg>Topology Optimization</li>
      <li class="l2 plum"><i class="tw open"></i><svg><use href="#i-cube"/></svg><span>Displacement (solid2)</span></li>
      <li class="l3"><i class="tw"></i><svg><use href="#i-volume"/></svg>Volume 1</li>
      <li class="l3"><i class="tw open"></i><svg><use href="#i-line"/></svg>Line 1</li>
      <li class="l4 plum"><i class="tw"></i><svg><use href="#i-sel"/></svg><span>Selection 1</span></li>
      <li class="l2"><i class="tw shut"></i><svg><use href="#i-export"/></svg>Export</li>
      <li class="l2"><i class="tw"></i><svg><use href="#i-report"/></svg>Reports</li>
    </ul>
  </section>

  <section class="panel settings">
    <div class="head"><h2>Settings</h2><button aria-label="Panel menu"><i class="caret wide"></i></button><button aria-label="Pin"><svg class="pin"><use href="#pin"/></svg></button></div>
    <h3>Density Model</h3>
    <div class="fields">
      <label for="f-label">Label:</label><input id="f-label" value="Density Model 1"><button class="goto" aria-label="Show label source"><svg><use href="#g-goto"/></svg></button>
      <label for="f-name">Name:</label><input id="f-name" value="dtopo1">
    </div>
    <button class="sec plain">Geometric Entity Selection</button>
    <div class="body geo">
      <div class="line"><label for="f-level">Geometric entity level:</label><span class="pick"><select id="f-level"><option>Domain</option></select></span></div>
      <div class="line"><label for="f-sel">Selection:</label><span class="pick"><select id="f-sel"><option>Optimized Domains</option></select></span></div>
      <div class="entities">
        <button class="toggle" aria-label="Active"><svg><use href="#g-toggle"/></svg></button>
        <div class="list">1</div>
        <div class="acts">
          <button class="blue" aria-label="Create selection"><svg><use href="#i-sel"/></svg></button>
          <button aria-label="Add"><svg><use href="#g-plus"/></svg></button>
          <button aria-label="Copy selection"><svg><use href="#copy"/></svg></button>
          <button aria-label="Remove"><svg><use href="#g-minus"/></svg></button>
          <button aria-label="Paste selection"><svg><use href="#g-clip"/></svg></button>
          <button aria-label="Clear"><svg><use href="#clearsel"/></svg></button>
          <button aria-label="Zoom to selection"><svg><use href="#g-zoomsel"/></svg></button>
        </div>
      </div>
    </div>
    <button class="sec"><i class="tw shut"></i>Equation</button>
    <button class="sec"><i class="tw down"></i>Filtering</button>
    <div class="body filter">
      <label for="f-type">Filter type:</label>
      <span class="pick"><select id="f-type"><option>Helmholtz</option></select></span>
      <label for="f-radius">Filter radius:</label>
      <div class="rmin">
        <span class="sym"><em>R</em><sub>min</sub></span>
        <span class="pick"><select id="f-radius"><option>User defined</option></select></span>
        <span></span>
        <span class="unit"><input aria-label="Filter radius value" value="Lmin">m</span>
      </div>
    </div>
    <button class="sec"><i class="tw shut"></i>Projection</button>
    <button class="sec"><i class="tw shut"></i>Interpolation</button>
    <button class="sec"><i class="tw shut"></i>Control Variable Discretization</button>
    <button class="sec"><i class="tw shut"></i>Control Variable Initial Value</button>
  </section>

  <section class="panel graphics">
    <div class="head"><h2>Graphics</h2><button aria-label="Panel menu"><i class="caret wide"></i></button><button aria-label="Pin"><svg class="pin"><use href="#pin"/></svg></button><button aria-label="Close"><svg class="pin" viewBox="0 0 10 10"><path d="M.5.5 9.500 9.500M9.500.5.5 9.500" stroke="#444" stroke-width="1.300"/></svg></button></div>
    <div class="toolbar">
      <button aria-label="Zoom in"><svg><use href="#v-in"/></svg></button>
      <button aria-label="Zoom out"><svg><use href="#v-out"/></svg></button>
      <button aria-label="Zoom box"><svg><use href="#v-box"/></svg></button><button class="slim" aria-label="Zoom options"><i class="caret wide"></i></button>
      <button class="roomy" aria-label="Zoom extents"><svg><use href="#v-fit"/></svg></button><span class="bar"></span>
      <button aria-label="Default view"><svg><use href="#v-axes"/></svg></button><button class="slim" aria-label="View options"><i class="caret wide"></i></button>
      <button class="roomy" aria-label="XY view"><svg><use href="#v-xy"/></svg></button>
      <button aria-label="YZ view"><svg><use href="#v-yz"/></svg></button>
      <button aria-label="XZ view"><svg><use href="#v-xz"/></svg></button><span class="bar"></span>
      <button aria-label="Rotate"><svg><use href="#v-rot"/></svg></button><button class="slim" aria-label="Rotate options"><i class="caret wide"></i></button><span class="bar"></span>
      <button class="on duo" aria-label="Scene light"><svg><use href="#v-light"/></svg><i class="caret wide"></i></button>
      <button aria-label="Transparency"><svg><use href="#v-transp"/></svg></button>
      <button aria-label="Grid"><svg><use href="#v-grid"/></svg></button>
      <button class="on" aria-label="Axis orientation"><svg><use href="#v-axon"/></svg></button>
      <button class="on" aria-label="Legend"><svg><use href="#v-legend"/></svg></button><span class="bar"></span>
      <button aria-label="Lock"><svg><use href="#v-lock"/></svg></button><span class="bar"></span>
      <button aria-label="Environment"><svg><use href="#v-shutter"/></svg></button><button class="slim" aria-label="Environment options"><i class="caret wide"></i></button>
      <button class="roomy" aria-label="Snapshot"><svg><use href="#v-cam"/></svg></button>
      <button aria-label="Print"><svg><use href="#v-print"/></svg></button>
    </div>
    <svg class="scene" viewBox="681 202 881 661" role="img" aria-label="Von Mises stress on the optimized hook">
      <defs>
        <clipPath id="bodyClip"><path class="spline closed" data-points="726,390 728,375 738,358 757,344 779,337 802,335 827,340 848,351 862,361 872,366 890,366 930,364.500 963,363 980,358 1013,347 1047,338 1090,335.300 1126,338 1164,347 1191,358 1230,375.500 1268,393.500 1306,409 1344,431 1383,458 1413,492 1432,527.500 1443,566 1446,594 1442,636 1436,665 1425,697 1406,729 1375,758 1348,778 1325,792 1302,796.500 1268,798 1241,795.500 1214,790.500 1176,777.500 1138,761 1111,749 1076,736 1057,729 1031,720 1034,709 1050,695 1069,687 1092,685 1115,689 1138,699 1161,705 1191,707.500 1226,704 1260,694 1283,681 1302,661 1314,642 1318,626 1318,601 1312,572 1298,551 1275,531 1251,517.500 1248,510 1230,501 1199,491 1168,483 1138,479 1107,478 1076,479 1038,484.500 1000,491 966,498 940,504 923,506.500 907,505 867,497 827,489 797,485 773,481 750,471.500 735,456 729,437 727,410"/></clipPath>
        <clipPath id="boreClip"><ellipse cx="796.200" cy="386" rx="37.500" ry="28.500"/></clipPath>
        <linearGradient id="wall" gradientUnits="userSpaceOnUse" x1="940" y1="0" x2="1325" y2="0"><stop offset="0" stop-color="#2424b4"/><stop offset=".14" stop-color="#2844cc"/><stop offset=".26" stop-color="#2c7ccc"/><stop offset=".38" stop-color="#30b4d4"/><stop offset=".5" stop-color="#40d4cc"/><stop offset=".6" stop-color="#70dc90"/><stop offset=".7" stop-color="#98e058"/><stop offset=".85" stop-color="#a8e048"/><stop offset="1" stop-color="#58d8a0"/></linearGradient>
        <linearGradient id="bore" x1="0" x2="1"><stop offset="0" stop-color="#2020a0"/><stop offset=".25" stop-color="#161278"/><stop offset=".7" stop-color="#1a1890"/><stop offset=".85" stop-color="#2830b0"/><stop offset="1" stop-color="#202098"/></linearGradient>
        <linearGradient id="jet" x1="0" y1="0" x2="0" y2="1"><stop offset="0" stop-color="#700000"/><stop offset=".065" stop-color="#900000"/><stop offset=".17" stop-color="#e01800"/><stop offset=".275" stop-color="#e88c00"/><stop offset=".385" stop-color="#e0e800"/><stop offset=".49" stop-color="#90fc60"/><stop offset=".595" stop-color="#40fcd0"/><stop offset=".7" stop-color="#34c8fc"/><stop offset=".805" stop-color="#2c74fc"/><stop offset=".91" stop-color="#2838e0"/><stop offset="1" stop-color="#181878"/></linearGradient>
        <filter id="b2" x="-50%" y="-50%" width="200%" height="200%"><feGaussianBlur stdDeviation="2"/></filter>
        <filter id="b4" x="-50%" y="-50%" width="200%" height="200%"><feGaussianBlur stdDeviation="4"/></filter>
        <filter id="b8" filterUnits="userSpaceOnUse" x="640" y="160" width="960" height="740"><feGaussianBlur stdDeviation="8"/></filter>
        <filter id="b16" filterUnits="userSpaceOnUse" x="640" y="160" width="960" height="740"><feGaussianBlur stdDeviation="16"/></filter>
      </defs>
      <g clip-path="url(#bodyClip)" fill="none" stroke-linecap="round">
        <path d="M681 202H1563V863H681Z" fill="#2424b0"/>
        <g filter="url(#b16)">
          <path d="M880 380 960 385 1010 370" stroke="#1e1c98" stroke-width="30"/>
          <path class="spline" stroke="#2444c0" stroke-width="56" data-points="1110,345 1191,356 1268,392 1344,430 1413,492 1440,560 1446,610"/>
          <path class="spline" stroke="#2858d0" stroke-width="56" data-points="1060,445 1120,438 1199,457 1279,492 1310,520 1326,560 1326,590"/>
          <path class="spline" stroke="#18127c" stroke-width="34" data-points="1195,396 1270,425 1320,465 1350,520 1354,570 1345,610"/>
          <path class="spline" stroke="#18126c" stroke-width="50" data-points="1020,712 1060,705 1110,715 1160,745"/>
          <path class="spline" stroke="#19147c" stroke-width="44" data-points="1160,748 1210,765 1270,762 1310,745"/>
          <path d="M1384 540Q1388 600 1366 650" stroke="#2c48c8" stroke-width="16"/>
          <path d="M1418 560Q1410 620 1390 680" stroke="#1e1c9c" stroke-width="12"/>
          <path d="M1140 755 1190 775" stroke="#2828b8" stroke-width="14"/>
        </g>
        <g filter="url(#b8)">
          <path class="spline" stroke="#2498b8" stroke-width="20" data-points="1185,348 1230,369 1306,403 1383,452 1420,495"/>
          <path class="spline" stroke="#2cb0d0" stroke-width="22" data-points="1060,452 1110,444 1160,446 1210,457 1265,480 1303,510 1322,550 1324,585"/>
          <path d="M892 425 912 402" stroke="#2850d8" stroke-width="12"/>
          <path d="M930 415Q1000 414 1080 396 1130 386 1160 392" stroke="#2844c8" stroke-width="12"/>
          <path d="M1050 422Q1120 412 1190 418" stroke="#1e1c98" stroke-width="8"/>
          <path d="M900 486 930 490" stroke="#2828cc" stroke-width="20"/>
        </g>
        <path class="spline" stroke="#50d8a0" stroke-width="9" filter="url(#b4)" data-points="1150,448 1199,456 1265,482 1300,510 1318,545"/>
        <path class="spline" stroke="#4440b0" stroke-width="2" filter="url(#b2)" data-points="866,400 872,420 888,434 920,439 960,435 1010,425 1060,415 1110,406 1150,404"/>
        <path class="spline closed" fill="url(#wall)" data-points="940,470 1000,458 1050,447 1099,443.500 1153,446 1199,457 1245,474 1279,492 1304,515 1319,545 1323,576 1320,606 1310,606 1280,570 1240,530 1150,510 1000,510 930,512"/>
        <path d="M1329 590Q1329 616 1319 645" stroke="#2c98bc" stroke-width="12" filter="url(#b4)"/>
        <path d="M1322 578Q1322 610 1317 628" stroke="#34c0c8" stroke-width="5" filter="url(#b2)"/>
        <path d="M1266 522Q1290 538 1304 566" stroke="#ccd420" stroke-width="9" filter="url(#b4)"/>
        <ellipse cx="1246" cy="503" rx="11" ry="7" fill="#e8b820" filter="url(#b2)"/>
        <path d="M1240 502 1248 511" stroke="#c01404" stroke-width="6" filter="url(#b2)"/>
        <path d="M1244 506 1248 510" stroke="#b00c00" stroke-width="3"/>
        <path d="M1252 516 1262 514" stroke="#48ccd0" stroke-width="7" filter="url(#b2)"/>
      </g>
      <path d="M727 393Q733 430 770 440 800 448 835 436 860 425 868 404L866 440 800 474Q740 470 732 430Z" fill="#1e1c9c" filter="url(#b4)" opacity=".5" clip-path="url(#bodyClip)"/>
      <ellipse cx="797" cy="388" rx="71" ry="54" fill="#171274"/>
      <ellipse cx="796.200" cy="386" rx="37.500" ry="28.500" fill="url(#bore)"/>
      <ellipse cx="804" cy="415" rx="33" ry="16.700" fill="#f6faff" clip-path="url(#boreClip)"/>
      <path d="M880 431.500Q886 426.500 893 427T902 434.500Q890 436 880 431.500Z" fill="#f6faff"/>
      <g class="wire">
        <ellipse cx="796.200" cy="386" rx="37.500" ry="28.500"/>
        <ellipse cx="796.500" cy="387.300" rx="75" ry="57.300"/>
        <path class="spline closed" data-points="695.300,393 700,367 720,340 746.500,322.500 773,314 800,311.500 827,314.500 853,323 880,335.500 907,345.500 940,349.500 967,346 1000,334 1033,324.500 1067,320.500 1093,320 1127,323 1160,330 1184,337.500 1230,357 1268,373 1306,389.500 1344,408 1383,434.500 1413,466 1440,508 1453.500,551 1456,586 1450,629 1436,663 1409,701 1367,738 1314,767 1260,784.500 1207,792 1153,790 1096,778 1050,758 1025,733 1019.500,711 1027,686 1046,667 1069,657 1092,654.500 1115,657.500 1138,666 1165,674 1193,677 1230,673 1268,658.500 1298,635 1316,606 1322.500,576 1319.500,545 1304,515 1279,492 1245,474 1199,457 1153,446 1099.500,443.500 1050,447 1000,457 920,474.500 873,484.500 840,487.500 813,485 793,479 767,467 730,448 710,431.500 698.500,410"/>
        <path class="spline" data-points="730,381.500 713,398 705,417 703.500,437 710,462 727,482 753,497.500 787,515 813,524 843,527.500 873,524.500 913,515.500 1000,498 1047,488 1107,483.500 1153,487 1199,498.500 1233,511 1268,528 1298,552.500 1315.500,583 1318.500,618"/>
        <path class="spline" data-points="1445.500,581 1449.500,611 1446,647 1434,683 1406,726 1367,761 1318,793.500 1268,815 1214,828 1168,829.500 1115,821 1057,801 1031,777.500 1022,754 1023,736 1031,720"/>
      </g>
      <g class="plottext">
        <text x="696" y="231">Load case 1</text>
        <text x="989" y="234">Volume: von Mises stress (N/m<tspan font-size="9" dy="-6">2</tspan><tspan dy="6">)</tspan></text>
        <text x="1192" y="234">Line: 1 (1)</text>
        <text x="1508" y="265">×10<tspan font-size="9" dy="-6">9</tspan></text>
        <rect x="1491.500" y="273.500" width="15" height="553" fill="url(#jet)" stroke="#555" stroke-opacity=".7"/>
        <path d="M1491 309H1494M1504 309H1507M1491 366.500H1494M1504 366.500H1507M1491 424H1494M1504 424H1507M1491 481.500H1494M1504 481.500H1507M1491 539H1494M1504 539H1507M1491 596.500H1494M1504 596.500H1507M1491 654H1494M1504 654H1507M1491 711.500H1494M1504 711.500H1507M1491 769H1494M1504 769H1507" stroke="#222"/>
        <g text-anchor="middle"><text x="1520" y="313">9</text><text x="1520" y="371">8</text><text x="1520" y="428">7</text><text x="1520" y="486">6</text><text x="1520" y="543">5</text><text x="1520" y="601">4</text><text x="1520" y="658">3</text><text x="1520" y="716">2</text><text x="1520" y="773">1</text></g>
      </g>
      <use href="#logo" x="1537" y="208" width="22" height="22"/>
      <g fill="none" stroke-width="1.500">
        <path d="M725 819 707 811" stroke="#40a040"/><path d="M699 807 709 807.500 706 813.500Z" fill="#40a040"/>
        <path d="M725 819 735 805" stroke="#d01860"/><path d="M740 798.500 738 808 732 804Z" fill="#d01860"/>
        <path d="M725 819V809" stroke="#3c80b8"/><path d="M725 800 728 810H722Z" fill="#3c80b8"/>
      </g>
      <g class="plottext"><text x="690" y="807">y</text><text x="721" y="799">z</text><text x="742" y="796">x</text></g>
    </svg>
  </section>

  <nav class="side" aria-label="Docked windows"><a href="#probe">Objective Probe Table 1</a><a href="#messages">Messages</a><a href="#progress">Progress</a><a href="#log">Log</a></nav>
</main>
<footer>4.39 GB | 5.14 GB</footer>
<script src="spline.js"></script>
</body>
</html>
```
FILE: styles.css
```css
* { box-sizing: border-box; }
body { margin: 0; min-height: 100vh; display: flex; flex-direction: column; background: #fbfcfe; color: #111; font: 12px/18px "Open Sans", "Noto Sans", sans-serif; }
button { border: 0; padding: 0; background: none; font: inherit; color: inherit; }
h1, h2, h3, p, ul { margin: 0; padding: 0; font-weight: 400; font-size: 12px; }
input, select { font: inherit; color: inherit; }
svg { display: block; flex: none; width: 16px; height: 16px; }
.defs { display: none; }
.blue { color: #3388c8; }
.red { color: #dc6038; }
.grey { color: #808284; }
.plum { color: #a82068; }
.pale { color: #c4c4c6; }
.caret { display: inline-block; width: 0; height: 0; margin-left: 2px; vertical-align: 2px; border: 3px solid transparent; border-top: 4px solid currentColor; border-bottom: 0; color: #111; }
.caret.wide { margin: 0; vertical-align: middle; border-width: 4px 4px 0; }
.bar { width: 1px; height: 13px; background: #b4b4b6; }

.titlebar { display: flex; align-items: center; height: 30px; padding-left: 4px; }
.applogo { width: 16px; height: 16px; margin-bottom: 6px; }
.quick { display: flex; align-items: center; padding-left: 14px; }
.quick button { width: 24px; height: 24px; display: grid; place-items: center; }
.quick .bar:first-child { margin-right: 3px; }
.quick .slim { width: 12px; margin: 0 3px 0 0; }
.quick .slim .caret { margin: 0; }
.titlebar h1 { flex: 1; text-align: center; padding-left: 8px; }
.wincontrols { display: flex; padding-right: 8px; }
.wincontrols button { width: 46px; height: 28px; display: grid; place-items: center; }
.wincontrols svg { width: 12px; height: 12px; }

.tabs { display: flex; height: 24px; margin: 0 11px 0 12px; padding-top: 1px; background: #ebebec; }
.tabs button { height: 23px; padding: 0 8px; margin-right: 1px; }
.tabs .file { width: 55px; margin: 0; background: #3388c8; color: #fff; padding: 0; }
.tabs .active { background: #fbfcfe; color: #3388c8; padding: 0 10px; margin-right: 2px; }
.tabs .help { width: 15px; height: 15px; margin: 2px 3px 0 auto; padding: 0; background: #3388c8; color: #fff; line-height: 15px; }

.ribbon { display: flex; height: 91px; margin: 0 11px; border: 1px solid #d8d9dc; border-top: 0; }
.group { position: relative; flex: none; display: flex; flex-direction: column; padding-top: 4px; }
.group::after { content: ""; position: absolute; right: 0; top: 9px; bottom: 6px; width: 1px; background: #d4d5d8; }
.group p { text-align: center; color: #707274; line-height: 16px; }
.tools { flex: 1; display: flex; justify-content: center; }
.g-workspace { width: 138px; } .g-workspace .tools { padding-left: 5px; }
.g-model { width: 167px; } .g-model .tools { padding-right: 4px; }
.g-definitions { width: 188px; } .g-definitions .tools { padding-left: 4px; }
.g-geometry { width: 135px; }
.g-narrow { width: 65px; }
.g-physics { width: 133px; } .g-physics .tools { padding-right: 4px; }
.g-mesh { width: 102px; } .g-mesh .tools { padding-right: 2px; }
.g-study { width: 179px; }
.g-results { width: 150px; }
.g-layout { width: 127px; } .g-layout .tools { padding-right: 4px; }
.big { display: flow-root; align-self: flex-start; line-height: 13px; white-space: nowrap; text-align: center; color: #111; }
.big svg { width: 32px; height: 32px; margin: 3px auto 2px; }
.big.blue svg { color: #3388c8; } .big.red svg { color: #dc6038; } .big.grey svg { color: #808284; } .big.plum svg { color: #a82068; }
.big.blue, .big.red, .big.grey, .big.plum { color: #111; }
.w44 { width: 44px; } .w56 { width: 57px; } .w62 { width: 63px; } .w76 { width: 76px; }
.stack { padding-left: 6px; }
.stack button { display: flex; align-items: center; height: 22px; gap: 2px; white-space: nowrap; }
.stack .off { color: #b0b0b4; }
.off .caret { color: #b0b0b4; }
.glyph { width: 16px; font-weight: 400; color: #3388c8; white-space: nowrap; font-size: 11px; text-align: center; display: flex; justify-content: center; align-items: baseline; }
.glyph.large { font-size: 14px; }
.off .glyph { color: #a8cce8; }

main { flex: 1; display: flex; gap: 6px; margin: 4px 11px 0; }
.panel { display: flex; flex-direction: column; border: 1px solid #d4d5d8; padding-top: 6px; }
.head { display: flex; align-items: flex-start; height: 26px; padding: 0 1px 0 7px; color: #444; }
.head h2 { flex: 1; font-size: 20px; line-height: 26px; font-weight: 300; color: #2b579a; }
.head button { width: 15px; height: 22px; display: grid; place-items: center; }
.head .caret { color: inherit; }
.pin { width: 10px; height: 12px; }
.toolbar { display: flex; align-items: center; height: 20px; }
.toolbar button { height: 18px; width: 23px; display: grid; place-items: center; }
.toolbar .slim { width: 18px; }
.r180 { transform: rotate(180deg); } .r90 { transform: rotate(90deg); } .r270 { transform: rotate(-90deg); }

.builder { flex: 0 0 292px; border-color: #a4d0e8; padding-bottom: 8px; }
.builder .head { color: #3388c8; }
.builder .head h2 { color: #3388d8; }
.builder .toolbar { padding-left: 3px; }
.builder .slim { padding-right: 3px; }
.tree { flex: 1; list-style: none; margin: 3px 4px 0; border: 1px solid #c8cacc; background: #fff; }
.tree li { display: flex; align-items: center; height: 18px; white-space: nowrap; }
.tree svg { margin: 0 6px 0 4px; }
.tree span { color: #111; }
.digits { width: 26px; text-align: center; color: #b02870; font: 700 7px/7px "DejaVu Sans", sans-serif; padding-right: 2px; }
.l0 { padding-left: 2px; } .l1 { padding-left: 22px; } .l2 { padding-left: 42px; } .l3 { padding-left: 62px; } .l4 { padding-left: 82px; }
.selected { background: #c2e1f7; }
.tw { width: 14px; height: 12px; flex: none; display: grid; place-items: center; }
.open::before { content: ""; width: 7px; height: 7px; background: #444; clip-path: polygon(100% 0, 100% 100%, 0 100%); }
.shut::before { content: ""; width: 6px; height: 10px; background: #909296; clip-path: polygon(0 0, 100% 50%, 0 100%, 0 0, 17% 18%, 17% 82%, 82% 50%, 17% 18%); }
.down::before { content: ""; width: 8px; height: 5px; background: #334; clip-path: polygon(0 0, 100% 0, 50% 100%); }

.settings { flex: 0 0 365px; }
.settings h3 { padding-left: 6px; font-size: 14px; line-height: 24px; font-weight: 300; color: #2b579a; }
.fields { display: grid; grid-template-columns: 45px 1fr 21px; align-items: center; grid-template-rows: 23px 19px; gap: 6px 0; padding: 10px 5px; }
.fields input { margin-right: 9px; }
.settings input { min-width: 0; height: 19px; padding: 0 2px; border: 1px solid #ccced0; background: #fff; }
.goto { height: 22px; display: grid; place-items: center; border: 1px solid #ccced0; border-radius: 2px; background: #ededed; }
.goto svg { width: 18px; height: 18px; }
.sec { display: flex; align-items: center; height: 25px; margin-bottom: 2px; background: #dfe8f5; text-align: left; padding-left: 2px; flex: none; }
.sec .tw { margin-right: 10px; }
.sec.plain { padding-left: 26px; margin-bottom: 0; }
.body { padding: 8px 5px 10px; }
.line { display: grid; grid-template-columns: 128px 1fr; align-items: center; margin-bottom: 6px; }
.pick { position: relative; display: block; }
.pick select { display: block; width: 100%; height: 21px; padding: 0 12px; appearance: none; border: 1px solid #ccced0; border-radius: 2px; background: linear-gradient(#f0f0f0, #e8e8e8); }
.pick::after { content: ""; position: absolute; right: 6px; top: 9px; border: 4px solid transparent; border-top-color: #111; border-bottom: 0; pointer-events: none; }
.entities { display: flex; align-items: flex-start; }
.toggle { width: 39px; height: 39px; display: grid; place-items: center; border: 1px solid #2c8cd8; border-radius: 2px; background: #9ccef4; }
.toggle svg { width: 30px; height: 14px; }
.list { flex: 1; height: 119px; margin: 0 12px 0 7px; padding: 2px 6px; border: 1px solid #ccced0; border-bottom-width: 3px; }
.acts { display: grid; grid-template-columns: 22px 22px; gap: 4px 10px; padding-top: 2px; }
.acts button { height: 16px; display: grid; place-items: center; }
.filter { padding: 7px 5px 11px; display: grid; gap: 4px; }
.filter label { padding-top: 1px; }
.sec:has(+ .filter) { margin-bottom: 0; }
.rmin { display: grid; grid-template-columns: 39px 1fr; gap: 6px 0; }
.sym { padding-left: 2px; font-size: 13px; }
.sym sub { font-size: 11px; vertical-align: -3px; line-height: 1; }
.unit { display: flex; align-items: center; gap: 10px; }
.unit input { flex: 1; }

.graphics { flex: 1; min-width: 0; background: linear-gradient(#fcfdfe, #f3f8fe 50%, #e2f0fd); }
.graphics .toolbar { padding-left: 3px; }
.graphics .bar { height: 15px; margin: 0 4px 0 3px; }
.graphics .slim { width: 14px; }
.graphics .roomy { margin-left: 4px; }
.toolbar .on { background: #a4d4f8; border: 1px solid #2c8cd8; border-radius: 2px; width: 18px; margin: 0 2px 0 3px; }
.toolbar .duo { width: 36px; margin-left: 6px; display: flex; align-items: center; justify-content: space-evenly; }
.scene { flex: 1; width: 100%; height: auto; min-height: 0; }
.wire { fill: none; stroke: #000; stroke-width: 1; }
.plottext { font: 12px "DejaVu Sans", sans-serif; fill: #111; }

.side { writing-mode: vertical-rl; flex: 0 0 20px; padding-top: 6px; display: flex; gap: 13px; font-size: 11px; line-height: 20px; }
.side a { color: #2b579a; text-decoration: none; }
footer { height: 36px; padding-left: 312px; text-align: center; font-size: 11px; line-height: 39px; }
```
FILE: spline.js
```js
// Turns lists of surface points into smooth SVG curves.
document.querySelectorAll('path.spline').forEach(function (path) {
  var pts = path.dataset.points.trim().split(/\s+/).map(function (p) { return p.split(',').map(Number); });
  var n = pts.length;
  var closed = path.classList.contains('closed');
  function at(i) { return closed ? pts[(i + n) % n] : pts[Math.max(0, Math.min(n - 1, i))]; }
  var d = 'M' + pts[0];
  for (var i = 0; i < (closed ? n : n - 1); i++) {
    var a = at(i - 1), b = at(i), c = at(i + 1), e = at(i + 2);
    d += 'C' + (b[0] + (c[0] - a[0]) / 6) + ',' + (b[1] + (c[1] - a[1]) / 6) + ' ' + (c[0] - (e[0] - b[0]) / 6) + ',' + (c[1] - (e[1] - b[1]) / 6) + ' ' + c;
  }
  path.setAttribute('d', closed ? d + 'Z' : d);
});
```
